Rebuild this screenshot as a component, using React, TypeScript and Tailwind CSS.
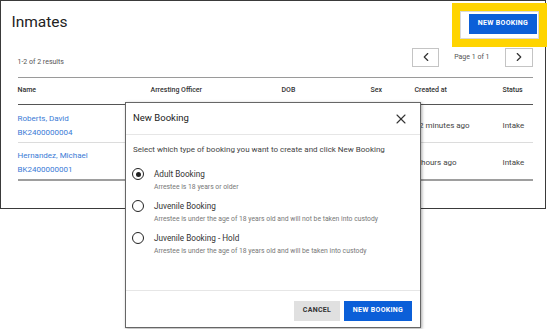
import React from 'react';
import { ChevronLeft, ChevronRight, X } from 'lucide-react';

const rows = [
  { name: 'Roberts, David', id: 'BK2400000004', created: '12 minutes ago', status: 'Intake' },
  { name: 'Hernandez, Michael', id: 'BK2400000001', created: '2 hours ago', status: 'Intake' },
];

const options = [
  { label: 'Adult Booking', note: 'Arrestee is 18 years or older', checked: true },
  {
    label: 'Juvenile Booking',
    note: 'Arrestee is under the age of 18 years old and will not be taken into custody',
    checked: false,
  },
  {
    label: 'Juvenile Booking - Hold',
    note: 'Arrestee is under the age of 18 years old and will be taken into custody',
    checked: false,
  },
];

const cols = 'grid grid-cols-[133px_131px_89px_44px_88px_1fr]';

export default function App() {
  return (
    <div className="relative w-[550px] h-[329px] bg-white font-['Roboto','Liberation_Sans',sans-serif] overflow-hidden">
      {/* Page frame */}
      <div className="w-[546px] h-[209px] border-[1.5px] border-[#3a3a3a]">
        <div className="flex justify-between pl-[10.5px] pr-[8px] pt-[11px]">
          <h1 className="text-[15.5px] leading-[20px] text-[#222]">Inmates</h1>
          <button className="mt-[1.5px] w-[68px] h-[20px] bg-[#0b5fd8] text-white text-[7px] font-bold tracking-[0.3px]">
            NEW BOOKING
          </button>
        </div>

        <div className="ml-[16.5px] w-[515px]">
          <div className="mt-[14px] h-[19px] flex items-end justify-between">
            <span className="text-[7px] leading-[10px] text-[#555]">1-2 of 2 results</span>
            <div className="flex items-center h-[19px]">
              <button className="w-[27px] h-[19px] border border-[#c4c4c4] flex items-center justify-center text-[#333]">
                <ChevronLeft size={14} strokeWidth={2} />
              </button>
              <span className="mx-[15px] text-[7px] text-[#555]">Page 1 of 1</span>
              <button className="w-[28px] h-[19px] border border-[#c4c4c4] flex items-center justify-center text-[#333]">
                <ChevronRight size={14} strokeWidth={2} />
              </button>
            </div>
          </div>

          <div className="mt-[10px] border-t-[1.5px] border-[#9a9a9a]">
            <div className={`${cols} h-[27px] pt-[7.5px] border-b border-[#555] text-[7px] leading-[10px] font-medium text-[#333]`}>
              <span>Name</span>
              <span>Arresting Officer</span>
              <span>DOB</span>
              <span>Sex</span>
              <span>Created at</span>
              <span>Status</span>
            </div>
            {rows.map((r, i) => (
              <div
                key={r.id}
                className={`${cols} items-center h-[38px] pt-[5px] ${
                  i === rows.length - 1 ? 'border-b-2 border-[#9e9e9e]' : 'border-b border-[#dcdcdc]'
                }`}
              >
                <div className="text-[8px] leading-[14px] text-[#3b7bd6]">
                  <div>{r.name}</div>
                  <div>{r.id}</div>
                </div>
                <span />
                <span />
                <span />
                <span className="text-[8px] text-[#444]">{r.created}</span>
                <span className="text-[8px] text-[#444]">{r.status}</span>
              </div>
            ))}
          </div>
        </div>
      </div>

      {/* Highlight around the page button */}
      <div className="absolute left-[452px] top-[3px] w-[95px] h-[44px] border-[8px] border-[#ffd400]">
        <div className="w-full h-full border border-[#d8d8d8]" />
      </div>

      {/* New booking dialog */}
      <div className="absolute left-[125px] top-[102px] w-[296px] h-[226px] bg-white border border-[#666] shadow-[1px_1px_3px_rgba(0,0,0,0.35)] flex flex-col">
        <div className="h-[32px] shrink-0 flex items-center justify-between pl-[7px] pr-[11px] border-b border-[#e6e6e6]">
          <span className="text-[9.5px] text-[#222]">New Booking</span>
          <X size={16} strokeWidth={1.6} className="text-[#333]" />
        </div>

        <div className="flex-1 px-[7px] pt-[9px]">
          <p className="text-[8px] leading-[12px] text-[#444]">
            Select which type of booking you want to create and click New Booking
          </p>
          <div className="mt-[12px] flex flex-col gap-[8px]">
            {options.map((o) => (
              <div key={o.label} className="flex items-start">
                <span className="ml-[-1px] w-[12px] h-[12px] rounded-full border-[1.8px] border-[#222] flex items-center justify-center shrink-0">
                  {o.checked && <span className="w-[5px] h-[5px] rounded-full bg-[#222]" />}
                </span>
                <div className="ml-[10px]">
                  <div className="text-[8.2px] leading-[12px] text-[#333]">{o.label}</div>
                  <div className="mt-[2px] text-[6.8px] leading-[10px] text-[#777]">{o.note}</div>
                </div>
              </div>
            ))}
          </div>
        </div>

        <div className="h-[37px] shrink-0 border-t border-[#e6e6e6] flex justify-end items-start pt-[9.5px] pr-[8px] gap-[4px]">
          <button className="w-[46px] h-[20px] bg-[#e0e0e0] text-[#333] text-[7px] font-bold tracking-[0.3px]">
            CANCEL
          </button>
          <button className="w-[68px] h-[20px] bg-[#0b5fd8] text-white text-[7px] font-bold tracking-[0.3px]">
            NEW BOOKING
          </button>
        </div>
      </div>
    </div>
  );
}
